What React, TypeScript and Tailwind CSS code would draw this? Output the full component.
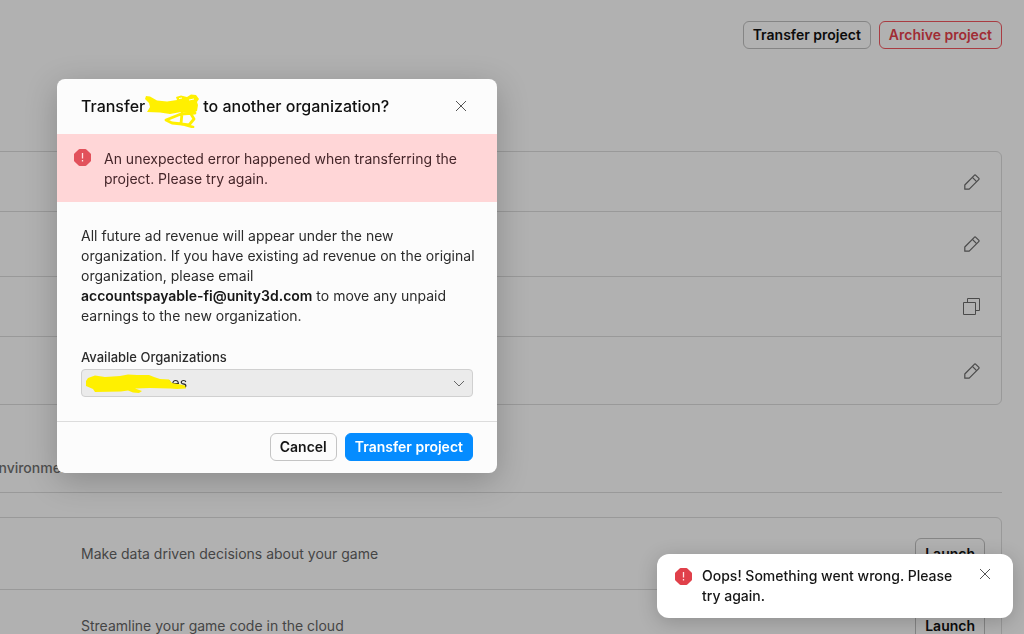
import React from "react";

const outlineButton =
  "flex items-center justify-center rounded-md border px-[9px] text-sm leading-5 font-semibold whitespace-nowrap";

function PencilIcon() {
  return (
    <svg width="16" height="16" viewBox="0 0 16 16" fill="none" stroke="currentColor" strokeWidth="1.2" strokeLinejoin="round" aria-hidden="true">
      <path d="M.8 11 10.3 1.3Q11.1.6 11.8 1.3L14.7 4.2Q15.4 4.9 14.7 5.6L5.2 15.2H.8Z" />
      <path d="M8.4 3.3 12.6 7.6" />
    </svg>
  );
}

function CopyIcon() {
  return (
    <svg width="17" height="17" viewBox="0 0 17 17" fill="none" stroke="currentColor" strokeWidth="1" aria-hidden="true">
      <path d="M.5 4.5h12v12H.5z" />
      <path d="M4.5 4.5v-4h12v12h-4" />
    </svg>
  );
}

function CloseIcon() {
  return (
    <svg width="12" height="12" viewBox="0 0 12 12" fill="none" stroke="currentColor" strokeWidth="1" aria-hidden="true">
      <path d="M1 1 11 11M11 1 1 11" />
    </svg>
  );
}

function ErrorIcon({ className }: { className: string }) {
  return (
    <svg className={className} width="17" height="17" viewBox="0 0 17 17" aria-hidden="true">
      <path d="M5.6 0h5.8Q12 0 12.4.4L16.6 4.6Q17 5 17 5.6v5.8q0 .6-.4 1l-4.2 4.2q-.4.4-1 .4H5.6q-.6 0-1-.4L.4 12.4Q0 12 0 11.4V5.6Q0 5 .4 4.6L4.6.4Q5 0 5.6 0z" fill="currentColor" />
      <path d="M8.5 4v5.5M8.5 11v1.5" stroke="#ffe4e4" strokeWidth="1.3" />
    </svg>
  );
}

function SettingRow({ height, label, children }: { height: string; label: string; children: React.ReactNode }) {
  return (
    <div className={`flex items-center justify-end border-b border-[#999] pr-[21px] text-[#4a4a4a] last:border-b-0 ${height}`}>
      <button type="button" aria-label={label}>{children}</button>
    </div>
  );
}

function ServiceRow({ text }: { text: string }) {
  return (
    <div className="flex h-[72px] items-center justify-between border-b border-[#999] pr-4 pl-[90px]">
      <p className="text-sm leading-5 text-[#454545]">{text}</p>
      <button type="button" className={`${outlineButton} h-8 border-[#858585] text-[#0c0c0c]`}>Launch</button>
    </div>
  );
}

export default function App() {
  return (
    <div className="h-screen overflow-hidden bg-[#b1b1b1] font-['Inter',sans-serif] text-sm">
      <main className="-ml-2.5 pt-[21px] pr-[22px]">
        <header className="flex justify-end gap-2">
          <button type="button" className={`${outlineButton} h-7 border-[#858585] text-[#0c0c0c]`}>Transfer project</button>
          <button type="button" className={`${outlineButton} h-7 border-[#a93c42] text-[#a02c34]`}>Archive project</button>
        </header>

        <section className="mt-[102px] rounded-md border border-[#999]">
          <SettingRow height="h-[60px]" label="Edit name"><PencilIcon /></SettingRow>
          <SettingRow height="h-[65px]" label="Edit details"><PencilIcon /></SettingRow>
          <SettingRow height="h-[60px]" label="Copy ID"><CopyIcon /></SettingRow>
          <SettingRow height="h-[67px]" label="Edit settings"><PencilIcon /></SettingRow>
        </section>

        <div className="mt-[38px] flex h-[50px] items-center border-b border-[#999]">
          <h2 className="text-sm leading-5 font-medium text-[#4e4e4e]">Environments</h2>
        </div>

        <section className="mt-6 rounded-md border border-[#999]">
          <ServiceRow text="Make data driven decisions about your game" />
          <ServiceRow text="Streamline your game code in the cloud" />
        </section>
      </main>

      <div
        role="dialog"
        aria-labelledby="dialog-title"
        className="fixed top-[79px] left-[57px] w-[440px] overflow-hidden rounded-lg bg-[#fcfcfc] text-[#2b2b2b] shadow-[0_8px_32px_rgba(0,0,0,0.22)]"
      >
        <div className="flex h-[55px] items-center justify-between pr-[30px] pb-px pl-6">
          <h1 id="dialog-title" className="flex items-center text-base leading-5 font-medium text-[#111]">
            Transfer
            <svg className="mr-0.5 h-11 w-14 shrink-0" viewBox="0 -6 56 44" fill="none" aria-hidden="true">
              <path d="M1 6 5 6.5 12 10.5 22 11.5 32 10 31 7 36 5.5 42 7 46 4.5 51 5 54 9 52 12 53 15 52 21 47 23.5 36 22 25 24 15 22.5 2 22 5 17 4 13 0 9z" fill="#fff000" />
              <path d="M50 23 36 24 26 28 21 30 27 33 37 34 48 37M37 23 36 34M46 24 49 29 44 35 36 34" stroke="#fff000" strokeWidth="2.8" strokeLinecap="round" strokeLinejoin="round" />
              <path d="M34 8.5 37 8M44 10 49 9" stroke="#fcfcfc" strokeWidth="1" />
            </svg>
            to another organization?
          </h1>
          <button type="button" aria-label="Close dialog" className="text-[#555]"><CloseIcon /></button>
        </div>

        <div role="alert" className="flex gap-[13px] bg-[#ffd6d7] pt-[15px] pr-6 pb-[13px] pl-[17px] text-[#45262a]">
          <ErrorIcon className="shrink-0 text-[#e2515b]" />
          <p className="leading-5">An unexpected error happened when transferring the project. Please try again.</p>
        </div>

        <div className="p-6">
          <p className="-mr-2 leading-5">
            All future ad revenue will appear under the new organization. If you have existing ad revenue on the original organization, please email{" "}
            <strong className="font-semibold whitespace-nowrap text-[#161616]">accountspayable-fi@unity3d.com</strong> to move any unpaid earnings to the new organization.
          </p>
          <label htmlFor="organization" className="mt-[21px] block text-[13px] leading-5 font-medium">Available Organizations</label>
          <div className="relative mt-0.5">
            <select id="organization" className="block h-7 w-full appearance-none rounded border border-[#d0d0d0] bg-[#ebebeb] pl-[59px] text-sm">
              <option>Games</option>
            </select>
            <svg className="pointer-events-none absolute top-0 left-0" width="110" height="28" viewBox="0 0 110 28" aria-hidden="true">
              <path d="M7 9 14 6.5 24 8 39 7 47 5.500 56 6 68 6 73 8 79 10 88 10.500 91 14 97 15 104 16.500 105 19.500 96 20 89 19.500 69 19 54 19.500 61 22 58 24 52 23.500 47 21.500 40 22.500 14 23 12 20 5 17 5 12z" fill="#fff000" />
            </svg>
            <svg className="pointer-events-none absolute top-1 right-2" width="12" height="20" viewBox="0 0 12 20" fill="none" stroke="#666" aria-hidden="true">
              <path d="M1 8l5 5 5-5" />
            </svg>
          </div>
        </div>

        <footer className="flex justify-end gap-2 border-t border-[#dcdcdc] px-6 pt-[11px] pb-3">
          <button type="button" className={`${outlineButton} h-7 border-[#c4c4c4] text-[#161616]`}>Cancel</button>
          <button type="button" className={`${outlineButton} h-7 border-[#058cff] bg-[#058cff] text-white`}>Transfer project</button>
        </footer>
      </div>

      <div role="status" className="fixed right-[11px] bottom-4 flex w-[356px] gap-2.5 rounded-xl bg-white pt-3 pr-[22px] pb-3 pl-[18px] shadow-[0_4px_20px_rgba(0,0,0,0.2)]">
        <ErrorIcon className="mt-0.5 shrink-0 text-[#e0404a]" />
        <p className="flex-1 leading-5 font-medium text-[#161616]">Oops! Something went wrong. Please try again.</p>
        <button type="button" aria-label="Dismiss notification" className="mt-0.5 self-start text-[#555]"><CloseIcon /></button>
      </div>
    </div>
  );
}
